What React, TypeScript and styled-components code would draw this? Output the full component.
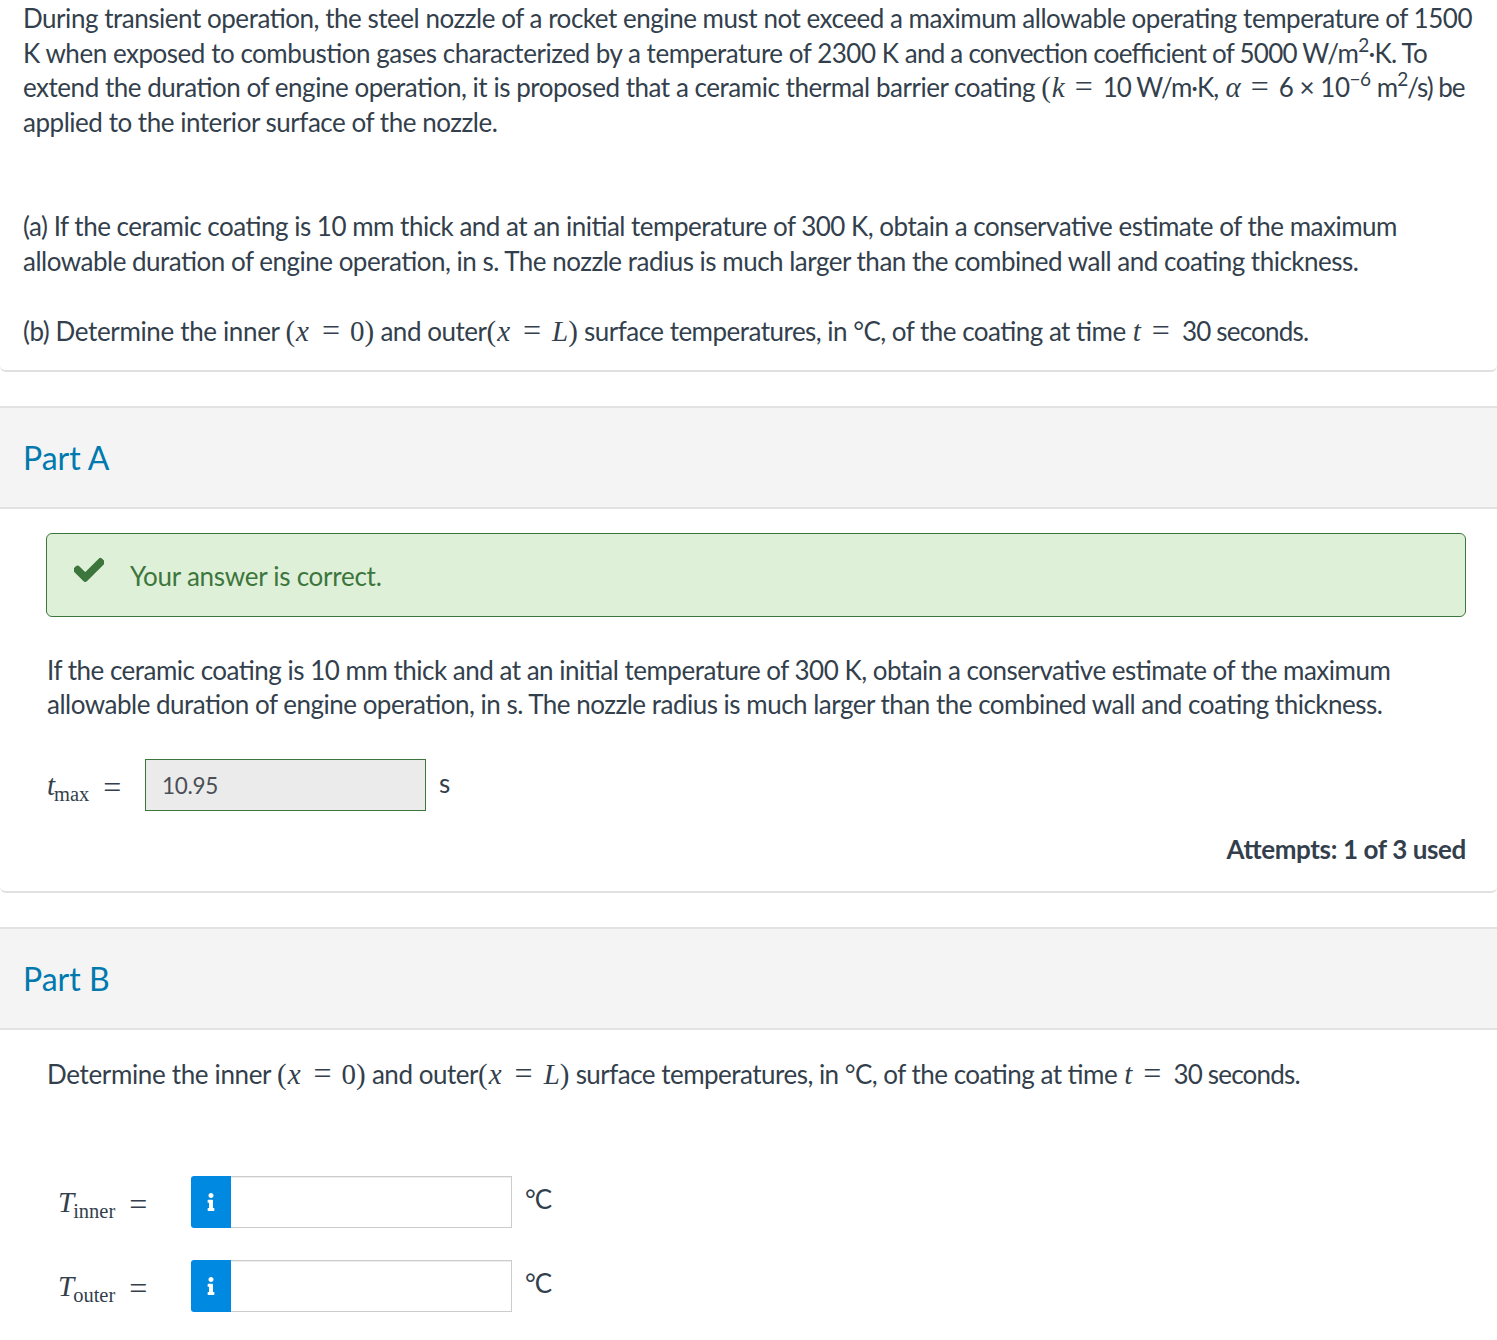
import React from 'react';
import styled, { createGlobalStyle } from 'styled-components';
import { FaCheck, FaInfo } from 'react-icons/fa';

const GlobalStyle = createGlobalStyle`
    html, body {
        margin: 0;
        padding: 0;
        background: #fff;
    }
    body {
        font-family: Lato, "Open Sans", sans-serif;
        font-size: 26px;
        line-height: 34.67px;
        letter-spacing: -0.47px;
        font-feature-settings: "liga" 1;
        color: #333f4c;
    }
`;

const Page = styled.div`
    width: 1497px;
    padding-bottom: 28px;
`;

const Card = styled.section<{ $bottom: number }>`
    background: #fff;
    border-bottom: 2px solid #e0e0e0;
    border-radius: 0 0 6px 6px;
    padding-bottom: ${props => props.$bottom}px;
    margin-bottom: 34px;
`;

const Intro = styled.div`
    padding: 1px 20px 0 23px;
`;

const Para = styled.p<{ $gap?: number }>`
    margin: 0 0 ${props => props.$gap ?? 0}px;
`;

// a stretch of text whose tracking differs a little from the body
const Run = styled.span<{ $ls: number }>`
    letter-spacing: ${props => props.$ls}px;
`;

const PartHead = styled.h2`
    margin: 0;
    height: 103px;
    box-sizing: border-box;
    padding: 3px 23px 0;
    display: flex;
    align-items: center;
    background: #f4f4f4;
    border-top: 2px solid #e2e2e2;
    border-bottom: 2px solid #e2e2e2;
    color: #0079ae;
    font-size: 32px;
    font-weight: 400;
    letter-spacing: 0;
`;

const Correct = styled.div`
    margin: 24px 31px 36px 46px;
    height: 84px;
    box-sizing: border-box;
    display: flex;
    align-items: center;
    padding-left: 27px;
    gap: 26px;
    background: #dff0d8;
    border: 1px solid #3c763d;
    border-radius: 6px;
    color: #3c763d;
    letter-spacing: -0.26px;
`;

const CheckMark = styled(FaCheck)`
    width: 30px;
    height: 30px;
    position: relative;
    top: -5px;
    stroke: currentColor;
    stroke-width: 30px;
`;

const CorrectText = styled.span`
    padding-top: 4px;
`;

const Body = styled.div<{ $top?: number }>`
    padding: ${props => props.$top ?? 0}px 31px 0 47px;
`;

const Math = styled.span`
    font-family: "Liberation Serif", serif;
    font-size: 29px;
    line-height: 0;
    letter-spacing: 0;
`;

const V = styled.i`
    font-family: "Liberation Serif", serif;
    font-size: 29px;
    line-height: 0;
    letter-spacing: 0;
    margin-left: 1px;
`;

const Eq = styled.span<{ $l?: number; $r?: number }>`
    font-family: "Liberation Serif", serif;
    font-size: 32px;
    line-height: 0;
    letter-spacing: 0;
    margin: 0 ${props => props.$r ?? 10}px 0 ${props => props.$l ?? 13}px;
`;

const LabelEq = styled(Eq)`
    position: relative;
    top: 3px;
    margin-left: 13px;
`;

const Sup = styled.sup`
    font-size: 19px;
    line-height: 0;
    vertical-align: baseline;
    position: relative;
    top: -11px;
`;

const AnswerRow = styled.div`
    display: flex;
    align-items: center;
    height: 52px;
    margin-top: 37px;
`;

const Label = styled.span<{ $width: number; $left: number }>`
    width: ${props => props.$width}px;
    margin-left: ${props => props.$left}px;
    flex: none;
    padding-top: 4px;
    font-family: "Liberation Serif", serif;
    white-space: nowrap;
    letter-spacing: 0;
`;

const Sub = styled.sub`
    font-size: 20.5px;
    line-height: 0;
    position: relative;
    left: -1px;
    vertical-align: -6px;
`;

const Filled = styled.div`
    width: 281px;
    height: 52px;
    box-sizing: border-box;
    border: 1px solid #3c763d;
    background: #ebebeb;
    padding: 3px 0 0 16px;
    display: flex;
    align-items: center;
    font-size: 22.5px;
    letter-spacing: -0.3px;
    color: #4a4f55;
`;

const Unit = styled.span`
    margin-left: 13px;
    position: relative;
    top: -2px;
`;

const Attempts = styled.div`
    text-align: right;
    font-weight: 700;
    letter-spacing: -0.38px;
    margin-top: 21px;
`;

const InfoBtn = styled.div`
    width: 40px;
    height: 52px;
    flex: none;
    background: #0089e0;
    border-radius: 3px 0 0 3px;
    color: #fff;
    display: flex;
    align-items: center;
    justify-content: center;
`;

const Field = styled.div`
    width: 281px;
    height: 52px;
    box-sizing: border-box;
    border: 1px solid #cccccc;
    border-left: none;
    box-shadow: inset 0 1px 1px rgba(0, 0, 0, 0.075);
`;

const InputRow = styled(AnswerRow)`
    margin-top: 32px;
    &:first-of-type {
        margin-top: 0;
    }
`;

const InputList = styled.div`
    margin-top: 85px;
`;

const UnitC = styled(Unit)`
    top: -3px;
    letter-spacing: -1px;
`;

const Coat = () => (
    <Run $ls={-0.5}>If the ceramic coating is 10 mm thick and at an initial temperature of 300 K, obtain a conservative estimate of the maximum allowable duration of engine operation, in s. The nozzle radius is much larger than the combined wall and coating thickness.</Run>
);

const Determine = () => (
    <>
        <Run $ls={-0.35}>Determine the inner </Run><Math>(</Math><V>x</V><Eq>=</Eq><Math>0)</Math> and outer<Math>(</Math><V>x</V><Eq>=</Eq><V>L</V><Math>)</Math> <Run $ls={-0.52}>surface temperatures, in °C, of the coating at time </Run><V>t</V><Eq $l={11} $r={12}>=</Eq><Run $ls={-0.8}>30 seconds.</Run>
    </>
);

const App: React.FC = () => {
    return (
        <Page>
            <GlobalStyle />
            <Card $bottom={21.4}>
                <Intro>
                    <Para $gap={69.6}>
                        During transient operation, the steel nozzle of a rocket engine must not exceed a maximum allowable operating temperature of 1500 K when exposed to combustion gases characterized by a temperature of 2300 K <Run $ls={-0.75}>and a convection coefficient of 5000 W/m<Sup>2</Sup>·K. To</Run> extend the duration of engine operation, it is proposed that a ceramic thermal barrier coating <Math>(</Math><V>k</V><Eq $l={10}>=</Eq><Run $ls={-1}>10 W/m·K,</Run> <V>α</V><Eq $l={10}>=</Eq>6 × 10<Sup>−6</Sup> <Run $ls={-1}>m<Sup>2</Sup>/s) be</Run> applied to the interior surface of the nozzle.
                    </Para>
                    <Para $gap={35}>(a) <Coat /></Para>
                    <Para>(b) <Determine /></Para>
                </Intro>
            </Card>

            <Card $bottom={24}>
                <PartHead>Part A</PartHead>
                <Correct>
                    <CheckMark />
                    <CorrectText>Your answer is correct.</CorrectText>
                </Correct>
                <Body>
                    <Para><Coat /></Para>
                    <AnswerRow>
                        <Label $width={99} $left={-1}>
                            <V>t</V><Sub>max</Sub><LabelEq>=</LabelEq>
                        </Label>
                        <Filled>10.95</Filled>
                        <Unit>s</Unit>
                    </AnswerRow>
                    <Attempts>Attempts: 1 of 3 used</Attempts>
                </Body>
            </Card>

            <PartHead>Part B</PartHead>
            <Body $top={27}>
                <Para><Determine /></Para>
                <InputList>
                    <InputRow>
                        <Label $width={134} $left={10}>
                            <V>T</V><Sub>inner</Sub><LabelEq>=</LabelEq>
                        </Label>
                        <InfoBtn><FaInfo size={18} /></InfoBtn>
                        <Field />
                        <UnitC>°C</UnitC>
                    </InputRow>
                    <InputRow>
                        <Label $width={134} $left={10}>
                            <V>T</V><Sub>outer</Sub><LabelEq>=</LabelEq>
                        </Label>
                        <InfoBtn><FaInfo size={18} /></InfoBtn>
                        <Field />
                        <UnitC>°C</UnitC>
                    </InputRow>
                </InputList>
            </Body>
        </Page>
    );
};

export default App;
